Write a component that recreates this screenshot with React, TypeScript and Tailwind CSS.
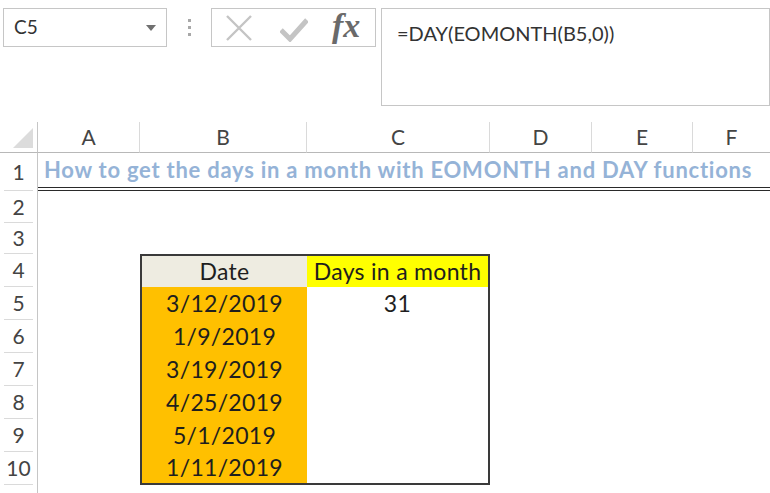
import React from "react";

const FONT = { fontFamily: "Lato, 'Open Sans', sans-serif" };

const cols = ["A", "B", "C", "D", "E", "F"];
const dates = ["3/12/2019", "1/9/2019", "3/19/2019", "4/25/2019", "5/1/2019", "1/11/2019"];

function RowHead({ n, h }: { n: string; h: string }) {
  return (
    <div className={`${h} flex items-center justify-center pr-[4px] pl-[4px] text-[21px] text-[#444]`}>
      <div className="w-full h-full flex items-center justify-center border-b border-[#dadada]">
        {n}
      </div>
    </div>
  );
}

export default function App() {
  return (
    <div className="w-[770px] h-[493px] bg-white overflow-hidden" style={FONT}>
      {/* formula bar */}
      <div className="flex items-start pt-[8px] h-[122px]">
        <div className="ml-[3px] w-[164px] h-[39px] border border-[#c6c6c6] flex items-center justify-between pl-[10px] pr-[10px]">
          <span className="text-[19px] text-[#333]">C5</span>
          <svg width="10" height="6" viewBox="0 0 10 6">
            <path d="M0 0 L10 0 L5 6 Z" fill="#707070" />
          </svg>
        </div>
        <div className="w-[44px] h-[39px] flex flex-col items-center justify-center gap-[4px]">
          <span className="w-[3px] h-[3px] bg-[#a8a8a8]" />
          <span className="w-[3px] h-[3px] bg-[#a8a8a8]" />
          <span className="w-[3px] h-[3px] bg-[#a8a8a8]" />
        </div>
        <div className="w-[165px] h-[39px] border border-[#c6c6c6] flex items-center">
          <svg className="ml-[13px]" width="28" height="26" viewBox="0 0 28 26">
            <path d="M2 1 L26 25 M26 1 L2 25" stroke="#c4c4c4" strokeWidth="2.4" fill="none" />
          </svg>
          <svg className="ml-[27px] mt-[4px]" width="28" height="24" viewBox="0 0 28 24">
            <path d="M1 12 L10 21 L27 2" stroke="#c4c4c4" strokeWidth="5" fill="none" strokeLinejoin="miter" />
          </svg>
          <span
            className="ml-[24px] text-[34px] italic font-bold text-[#6a6a6a] leading-none -mt-[4px]"
            style={{ fontFamily: "'Liberation Serif', serif" }}
          >
            fx
          </span>
        </div>
        <div className="ml-[5px] flex-1 h-[98px] border border-[#c6c6c6] pl-[15px] pt-[9px] text-[20px] text-[#333]">
          =DAY(EOMONTH(B5,0))
        </div>
      </div>

      {/* sheet grid */}
      <div className="grid grid-cols-[38px_102px_167px_183px_102px_101px_77px]">
        {/* column headers */}
        <div className="h-[31px] border-b border-[#b8b8b8] border-r border-r-[#c6c6c6] flex items-end justify-center pb-[4px] pl-[8px]">
          <svg width="20" height="20" viewBox="0 0 20 20">
            <path d="M20 0 L20 20 L0 20 Z" fill="#dcdcdc" />
          </svg>
        </div>
        {cols.map((c, i) => (
          <div
            key={c}
            className={`h-[31px] border-b border-[#b8b8b8] flex items-center justify-center text-[21px] text-[#444] ${
              i < cols.length - 1 ? "border-r border-r-[#dadada]" : ""
            }`}
          >
            {c}
          </div>
        ))}

        {/* row 1 */}
        <RowHead n="1" h="h-[38px] border-r border-[#c6c6c6]" />
        <div className="col-span-6 h-[38px] border-b-[4px] border-double border-[#2a2a2a] flex items-center pl-[6px] pb-[2px] text-[22px] tracking-[0.75px] font-bold text-[#95b3d7] whitespace-nowrap">
          How to get the days in a month with EOMONTH and DAY functions
        </div>

        {/* rows 2, 3 */}
        <RowHead n="2" h="h-[32px] border-r border-[#c6c6c6]" />
        <div className="col-span-6 h-[32px]" />
        <RowHead n="3" h="h-[31px] border-r border-[#c6c6c6]" />
        <div className="col-span-6 h-[31px]" />

        {/* row 4 */}
        <RowHead n="4" h="h-[33px] border-r border-[#c6c6c6]" />
        <div className="h-[33px]" />
        <div className="h-[33px] border-t-2 border-l-2 border-[#3a3a3a] bg-[#eeece1] flex items-center justify-center text-[23px] tracking-[0.3px] text-[#1e1e1e]">
          Date
        </div>
        <div className="h-[33px] border-t-2 border-r-2 border-[#3a3a3a] bg-[#ffff00] flex items-center justify-center text-[23px] tracking-[0.3px] text-[#1e1e1e]">
          Days in a month
        </div>
        <div className="col-span-3 h-[33px]" />

        {/* rows 5-10 */}
        {dates.map((d, i) => (
          <React.Fragment key={d}>
            <RowHead n={String(i + 5)} h="h-[33px] border-r border-[#c6c6c6]" />
            <div className="h-[33px]" />
            <div
              className={`h-[33px] border-l-2 border-[#3a3a3a] bg-[#ffc000] flex items-center justify-center text-[23px] tracking-[0.3px] text-[#1e1e1e] ${
                i === dates.length - 1 ? "border-b-2" : ""
              }`}
            >
              {d}
            </div>
            <div
              className={`h-[33px] border-r-2 border-[#3a3a3a] bg-white flex items-center justify-center text-[23px] tracking-[0.3px] text-[#1e1e1e] ${
                i === dates.length - 1 ? "border-b-2" : ""
              }`}
            >
              {i === 0 ? "31" : ""}
            </div>
            <div className="col-span-3 h-[33px]" />
          </React.Fragment>
        ))}

        {/* row 11 partial */}
        <RowHead n="" h="h-[33px] border-r border-[#c6c6c6]" />
      </div>
    </div>
  );
}
